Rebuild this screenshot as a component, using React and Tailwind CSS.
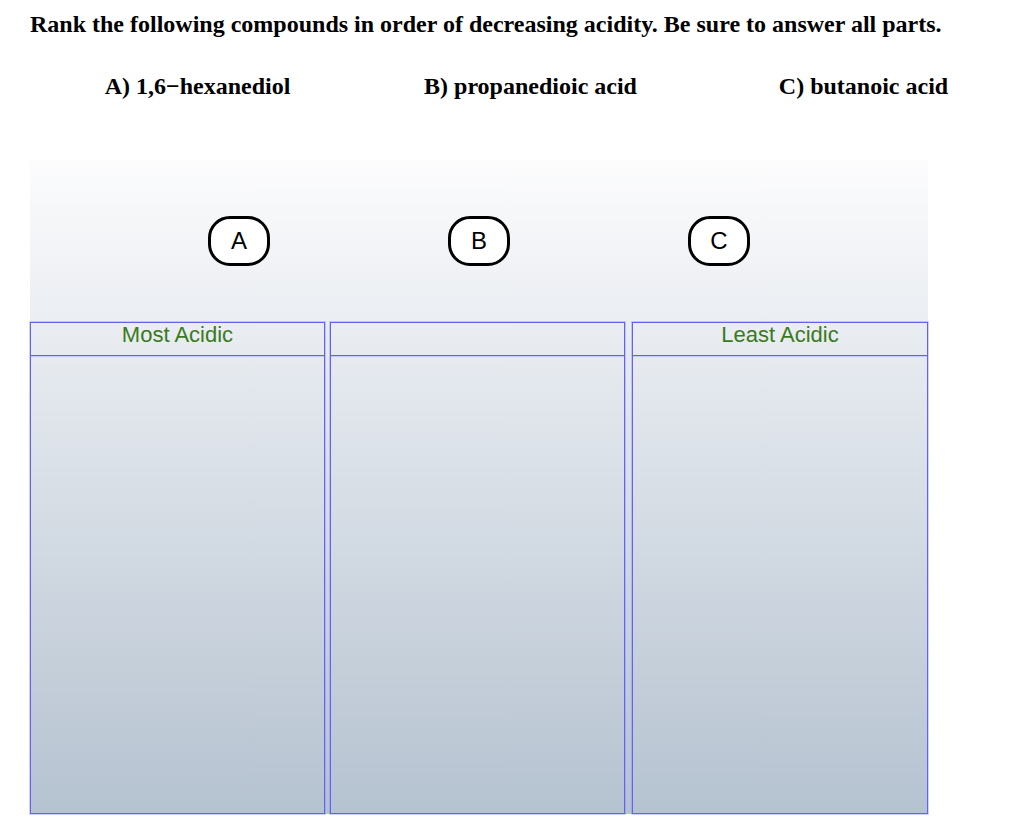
import React from "react";

const serif = { fontFamily: '"Liberation Serif", "Times New Roman", serif' };

function Pill({ letter }) {
  return (
    <div className="w-[62px] h-[50px] rounded-[22px] border-[3px] border-black bg-white flex items-center justify-center text-[24px] leading-none text-black font-['Liberation_Sans',Arial,sans-serif]">
      {letter}
    </div>
  );
}

function Column({ label, width }) {
  return (
    <div
      className={`${width} h-full flex flex-col border border-[#6262f6] shadow-[0_0_0_1px_rgba(120,120,255,0.35)]`}
    >
      <div className="h-[33px] shrink-0 border-b border-[#6262f6] shadow-[0_1px_0_0_rgba(120,120,255,0.3)] text-center text-[22px] leading-[24px] text-[#3a7a1c] font-['Liberation_Sans',Arial,sans-serif]">
        {label}
      </div>
      <div className="flex-1" />
    </div>
  );
}

export default function App() {
  return (
    <div className="w-[1024px] h-[839px] overflow-hidden bg-white">
      <div
        className="pl-[30px] pt-[10px] text-[24px] leading-[28px] font-bold text-black whitespace-nowrap"
        style={serif}
      >
        Rank the following compounds in order of decreasing acidity. Be sure to answer all parts.
      </div>
      <div
        className="mt-[34px] pl-[31px] grid grid-cols-[333px_333px_333px] text-[24px] leading-[28px] font-bold text-black whitespace-nowrap"
        style={serif}
      >
        <div className="text-center">A) 1,6−hexanediol</div>
        <div className="text-center">B) propanedioic acid</div>
        <div className="text-center">C) butanoic acid</div>
      </div>
      <div className="ml-[30px] mt-[60px] w-[898px] h-[654px] flex flex-col bg-gradient-to-b from-[#fcfcfd] to-[#b5c2d0]">
        <div className="h-[162px] shrink-0 pt-[56px] flex justify-center gap-[178px]">
          <Pill letter="A" />
          <Pill letter="B" />
          <Pill letter="C" />
        </div>
        <div className="flex-1 flex">
          <Column label="Most Acidic" width="w-[295px]" />
          <div className="w-[5px]" />
          <Column label="" width="w-[295px]" />
          <div className="w-[7px]" />
          <Column label="Least Acidic" width="w-[296px]" />
        </div>
      </div>
    </div>
  );
}
